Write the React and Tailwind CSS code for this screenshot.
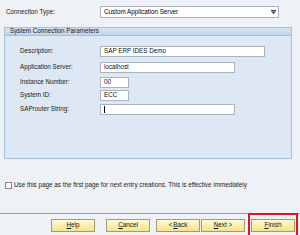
import React from 'react'

const font = { fontFamily: '"Liberation Sans", Arial, sans-serif' }

function Field({ label, width, value, top, cursor }) {
  return (
    <div className={`flex items-center shrink-0 ${top}`}>
      <div className="w-[95px] pl-[15px] text-[#1a1a1a]">{label}</div>
      <div
        className={`${width} h-[11px] bg-white border border-[#a9b4c0] flex items-center pl-[3px] text-[#111]`}
      >
        {value}
        {cursor && <span className="w-px h-[7px] bg-black" />}
      </div>
    </div>
  )
}

function WizButton({ children, className = '' }) {
  return (
    <button
      className={`h-[13px] w-[44px] border border-[#a39b72] bg-gradient-to-b from-[#fffbd6] to-[#f4e286] text-[#111] flex items-center justify-center leading-none ${className}`}
    >
      {children}
    </button>
  )
}

export default function App() {
  return (
    <div
      className="w-[300px] h-[235px] bg-[#eef2f7] text-[6.3px] leading-none overflow-hidden"
      style={font}
    >
      {/* connection type */}
      <div className="flex items-center pt-[6px]">
        <div className="w-[100px] pl-[6px] text-[#1a1a1a]">Connection Type:</div>
        <div className="w-[179px] h-[12px] bg-white border border-[#a9b4c0] flex items-center justify-between pl-[3px] pr-[2px]">
          <span>Custom Application Server</span>
          <svg width="5" height="4" viewBox="0 0 5 4">
            <rect x="0" y="0" width="5" height="1" fill="#1f3a66" />
            <path d="M0 1.5h5L2.5 4z" fill="#1f3a66" />
          </svg>
        </div>
      </div>

      {/* parameters group */}
      <div className="ml-[4px] mt-[9px] w-[288px] h-[132px] border border-[#a3c0dd] bg-[#dde8f4] flex flex-col">
        <div className="h-[8px] shrink-0 bg-gradient-to-b from-[#d6e4f2] to-[#bfd4ea] border-b border-[#a3c0dd] pl-[5px] flex items-center text-[#1a1a1a]">
          System Connection Parameters
        </div>
        <Field label="Description:" width="w-[165px]" value="SAP ERP IDES Demo" top="mt-[10px]" />
        <Field label="Application Server:" width="w-[135px]" value="localhost" top="mt-[5px]" />
        <Field label="Instance Number:" width="w-[29px]" value="00" top="mt-[4px]" />
        <Field label="System ID:" width="w-[29px]" value="ECC" top="mt-[2px]" />
        <Field label="SAProuter String:" width="w-[135px]" value="" cursor top="mt-[3px]" />
      </div>

      {/* checkbox */}
      <div className="flex items-center mt-[23px] pl-[5px]">
        <span className="w-[7px] h-[7px] bg-white border border-[#7b8794]" />
        <span className="ml-[2px] text-[#1a1a1a]">
          Use this page as the first page for next entry creations. This is effective immediately
        </span>
      </div>

      {/* footer */}
      <div className="mt-[24px] border-t border-[#9aa3ad] flex items-start pl-[51px]">
        <WizButton className="mt-[5px] w-[43px]">
          <span className="underline">H</span>elp
        </WizButton>
        <WizButton className="mt-[5px] w-[43px] ml-[11px]">
          <span className="underline">C</span>ancel
        </WizButton>
        <WizButton className="mt-[5px] ml-[6px]">
          &lt; <span className="underline ml-[1px]">B</span>ack
        </WizButton>
        <WizButton className="mt-[5px] ml-[1px]">
          <span className="underline">N</span>ext &gt;
        </WizButton>
        <div className="ml-[3px] -mt-px border-2 border-[#e0141e] pt-[4px] px-px pb-[10px]">
          <WizButton className="border-[#7e7656]">
            <span className="underline">F</span>inish
          </WizButton>
        </div>
      </div>
    </div>
  )
}
